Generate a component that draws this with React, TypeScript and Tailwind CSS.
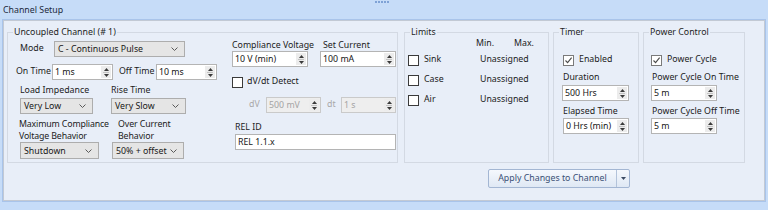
import React from "react";

function TriUp() {
  return (
    <svg width="5" height="3" viewBox="0 0 5 3">
      <path d="M0 3 L2.5 0 L5 3Z" fill="#3a3a3a" />
    </svg>
  );
}
function TriDown({ color = "#3a3a3a" }: { color?: string }) {
  return (
    <svg width="5" height="3" viewBox="0 0 5 3">
      <path d="M0 0 L2.5 3 L5 0Z" fill={color} />
    </svg>
  );
}

function Spin({ value, className = "", disabled = false }: { value: string; className?: string; disabled?: boolean }) {
  return (
    <div
      className={`flex h-[16px] shrink-0 border ${
        disabled ? "border-[#cacaca] bg-[#eeeeee] text-[#a4a4a4]" : "border-[#b4b4b4] bg-white text-[#161616]"
      } ${className}`}
    >
      <div className="flex-1 overflow-hidden whitespace-nowrap pl-[2px] leading-[14px]">{value}</div>
      <div className="my-px mr-px flex w-[10px] flex-col items-center justify-center gap-[1px] bg-[#ececec]">
        <TriUp />
        <div className="h-px w-[6px] bg-[#c2c2c2]" />
        <TriDown />
      </div>
    </div>
  );
}

function Select({ value, className = "" }: { value: string; className?: string }) {
  return (
    <div className={`flex h-[16px] shrink-0 items-center border border-[#adadad] bg-[#e5e5e5] pl-[3px] pr-[6px] ${className}`}>
      <span className="flex-1 whitespace-nowrap leading-[14px] text-[#181818]">{value}</span>
      <svg width="7" height="4" viewBox="0 0 7 4">
        <path d="M0.5 0.5 L3.5 3.5 L6.5 0.5" stroke="#5a5a5a" strokeWidth="1" fill="none" />
      </svg>
    </div>
  );
}

function Check({ checked = false }: { checked?: boolean }) {
  return (
    <div
      className={`flex h-[11px] w-[11px] shrink-0 items-center justify-center border bg-white ${
        checked ? "border-[#7a7a7a]" : "border-[#3a3a3a]"
      }`}
    >
      {checked && (
        <svg width="9" height="9" viewBox="0 0 9 9">
          <path d="M1.5 4.5 L3.6 6.6 L7.6 1.6" stroke="#4a4a4a" strokeWidth="1.1" fill="none" />
        </svg>
      )}
    </div>
  );
}

function Group({ title, className = "", children }: { title: string; className?: string; children?: React.ReactNode }) {
  return (
    <div className={`relative shrink-0 border border-[#d3d9e3] ${className}`}>
      <span className="absolute left-[5px] top-[-7px] whitespace-nowrap bg-[#e8eef8] px-[1px] leading-[12px] text-[#1e1e1e]">
        {title}
      </span>
      {children}
    </div>
  );
}

export default function App() {
  return (
    <div className="h-[210px] w-[768px] overflow-hidden bg-[#c6dcf8] font-['Noto_Sans',sans-serif] text-[8.8px] text-[#1b1b1b]">
      <div className="relative h-[19px] pl-[3px] leading-[20px] text-[#1d2a3c]">
        Channel Setup
        <svg className="absolute left-[375px] top-[1px]" width="16" height="3" viewBox="0 0 16 3">
          <rect x="0" y="0" width="2" height="2" fill="#7fa2d6" />
          <rect x="3" y="0" width="2" height="2" fill="#7fa2d6" />
          <rect x="6" y="0" width="2" height="2" fill="#7fa2d6" />
          <rect x="9" y="0" width="2" height="2" fill="#7fa2d6" />
          <rect x="12" y="0" width="2" height="2" fill="#7fa2d6" />
        </svg>
      </div>
      <div className="ml-[2px] w-[764px] border border-[#a9c4ea]">
        <div className="h-[181px] border border-[#c2c9d4] bg-[#e8eef8] pl-[3px]">
          <div className="mt-[11px] flex h-[131px]">
            {/* Uncoupled Channel */}
            <Group title="Uncoupled Channel (# 1)" className="flex w-[391px]">
              <div className="w-[224px] shrink-0">
                <div className="mt-[8px] flex h-[16px] items-center">
                  <span className="ml-[12px] w-[34px]">Mode</span>
                  <Select value="C - Continuous Pulse" className="w-[131px]" />
                </div>
                <div className="mt-[7px] flex h-[16px] items-center">
                  <span className="ml-[8px] w-[36px] whitespace-nowrap">On Time</span>
                  <Spin value="1 ms" className="w-[61px]" />
                  <span className="ml-[6px] w-[37px] whitespace-nowrap">Off Time</span>
                  <Spin value="10 ms" className="w-[61px]" />
                </div>
                <div className="mt-[4px] flex h-[12px] items-center leading-[12px]">
                  <span className="ml-[12px] w-[91px] whitespace-nowrap">Load Impedance</span>
                  <span className="whitespace-nowrap">Rise Time</span>
                </div>
                <div className="mt-[2px] flex h-[16px] items-center">
                  <Select value="Very Low" className="ml-[12px] w-[73px]" />
                  <Select value="Very Slow" className="ml-[18px] w-[75px]" />
                </div>
                <div className="mt-[4px] flex h-[24px] leading-[12px]">
                  <div className="ml-[11px] w-[94px] shrink-0 tracking-[-0.15px]">
                    <div className="whitespace-nowrap">Maximum Compliance</div>
                    <div className="whitespace-nowrap">Voltage Behavior</div>
                  </div>
                  <div className="ml-[5px] tracking-[-0.1px]">
                    <div className="whitespace-nowrap">Over Current</div>
                    <div className="whitespace-nowrap">Behavior</div>
                  </div>
                </div>
                <div className="flex h-[17px] items-center">
                  <Select value="Shutdown" className="ml-[12px] h-[17px] w-[79px]" />
                  <Select value="50% + offset" className="ml-[13px] h-[17px] w-[72px]" />
                </div>
              </div>
              <div className="w-[165px] shrink-0">
                <div className="mt-[6px] flex h-[12px] leading-[12px]">
                  <span className="w-[91px] whitespace-nowrap">Compliance Voltage</span>
                  <span className="whitespace-nowrap">Set Current</span>
                </div>
                <div className="flex h-[16px]">
                  <Spin value="10 V (min)" className="w-[76px]" />
                  <Spin value="100 mA" className="ml-[12px] w-[76px]" />
                </div>
                <div className="mt-[9px] flex h-[12px] items-center">
                  <Check />
                  <span className="ml-[4px] whitespace-nowrap">dV/dt Detect</span>
                </div>
                <div className="mt-[9px] flex h-[16px] items-center text-[#a8a8a8]">
                  <span className="ml-[17px] w-[17px]">dV</span>
                  <Spin value="500 mV" disabled className="w-[55px]" />
                  <span className="ml-[6px] w-[14px]">dt</span>
                  <Spin value="1 s" disabled className="w-[55px]" />
                </div>
                <div className="ml-[3px] mt-[8px] h-[12px] leading-[12px]">REL ID</div>
                <div className="ml-[3px] mt-[1px] h-[16px] w-[161px] border border-[#b4b4b4] bg-white pl-[2px] leading-[14px] text-[#161616]">
                  REL 1.1.x
                </div>
              </div>
            </Group>

            {/* Limits */}
            <Group title="Limits" className="ml-[6px] w-[145px]">
              <div className="mt-[4px] flex h-[12px] leading-[12px]">
                <span className="ml-[71px] w-[38px]">Min.</span>
                <span>Max.</span>
              </div>
              <div className="mt-[5px] flex flex-col gap-[8px]">
                {["Sink", "Case", "Air"].map((n) => (
                  <div key={n} className="flex h-[12px] items-center">
                    <div className="ml-[3px]">
                      <Check />
                    </div>
                    <span className="ml-[5px] w-[56px]">{n}</span>
                    <span>Unassigned</span>
                  </div>
                ))}
              </div>
            </Group>

            {/* Timer */}
            <Group title="Timer" className="ml-[4px] w-[86px]">
              <div className="ml-[9px] mt-[21px] flex h-[12px] items-center">
                <Check checked />
                <span className="ml-[5px]">Enabled</span>
              </div>
              <div className="ml-[9px] mt-[5px] h-[12px] leading-[12px]">Duration</div>
              <Spin value="500 Hrs" className="ml-[8px] mt-[2px] w-[67px]" />
              <div className="ml-[9px] mt-[4px] h-[12px] whitespace-nowrap leading-[12px]">Elapsed Time</div>
              <Spin value="0 Hrs (min)" className="ml-[9px] mt-[1px] w-[66px]" />
            </Group>

            {/* Power Control */}
            <Group title="Power Control" className="ml-[4px] w-[102px]">
              <div className="ml-[7px] mt-[21px] flex h-[12px] items-center">
                <Check checked />
                <span className="ml-[5px] whitespace-nowrap">Power Cycle</span>
              </div>
              <div className="ml-[8px] mt-[5px] h-[12px] whitespace-nowrap leading-[12px]">Power Cycle On Time</div>
              <Spin value="5 m" className="ml-[7px] mt-[2px] w-[66px]" />
              <div className="ml-[8px] mt-[4px] h-[12px] whitespace-nowrap leading-[12px]">Power Cycle Off Time</div>
              <Spin value="5 m" className="ml-[7px] mt-[1px] w-[66px]" />
            </Group>
          </div>

          <div className="ml-[481px] mt-[6px] flex h-[19px] w-[142px] rounded-[2px] border border-[#a3b6d3] bg-gradient-to-b from-[#f5f8fd] to-[#dfe8f4] text-[#3b5176]">
            <div className="flex flex-1 items-center justify-center whitespace-nowrap leading-[17px]">Apply Changes to Channel</div>
            <div className="flex w-[13px] items-center justify-center border-l border-[#b3c3da]">
              <TriDown color="#3b4a63" />
            </div>
          </div>
        </div>
      </div>
    </div>
  );
}
